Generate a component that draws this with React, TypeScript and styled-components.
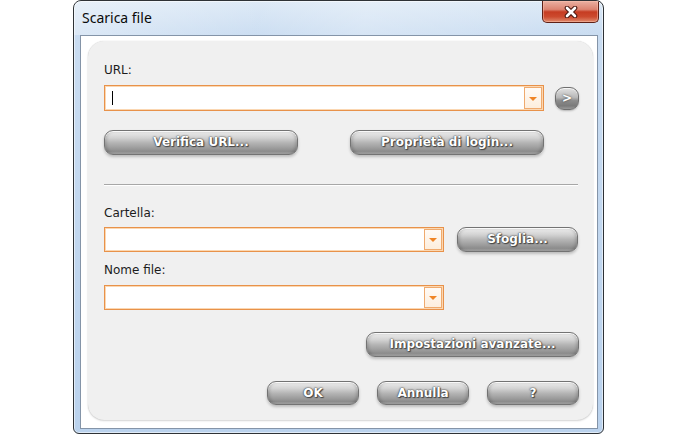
import React from 'react';
import styled, { createGlobalStyle } from 'styled-components';

const Global = createGlobalStyle`
  html, body { margin: 0; padding: 0; background: #ffffff; }
  body { width: 680px; height: 435px; overflow: hidden; }
  #root { width: 680px; height: 435px; }
`;

const Window = styled.div`
  box-sizing: border-box;
  margin-left: 73px;
  width: 531px;
  height: 434px;
  border: 1px solid #2e3236;
  border-radius: 8px 8px 6px 6px;
  background: linear-gradient(to bottom, #dce9f6 0px, #c9dcf1 34px, #bad2ed 100%);
  box-shadow: inset 0 0 0 1px rgba(255, 255, 255, 0.55);
  display: flex;
  flex-direction: column;
  overflow: hidden;
`;

const TitleBar = styled.div`
  height: 34px;
  flex: none;
  display: flex;
  align-items: center;
  padding-left: 8px;
  background: linear-gradient(100deg, rgba(255,255,255,0.35) 0%, rgba(255,255,255,0.05) 35%, rgba(255,255,255,0.25) 55%, rgba(255,255,255,0) 100%);
`;

const Title = styled.div`
  flex: 1;
  font: 14px "Noto Sans", "Open Sans", sans-serif;
  color: #0a0a0a;
  padding-bottom: 1px;
`;

const CloseButton = styled.div`
  align-self: flex-start;
  width: 57px;
  height: 22px;
  margin-right: 4px;
  box-sizing: border-box;
  border: 1px solid #5e2016;
  border-top: none;
  border-radius: 0 0 5px 5px;
  background: linear-gradient(to bottom, #eab0a2 0%, #dc8471 40%, #c63c22 52%, #cc4a2e 75%, #e08b6e 100%);
  box-shadow: inset 0 0 0 1px rgba(255, 200, 180, 0.45);
  display: flex;
  align-items: center;
  justify-content: center;
`;

const Client = styled.div`
  flex: 1;
  margin: 0 5px 4px 6px;
  border: 1px solid #8494a8;
  background: #ffffff;
  padding: 5px 4px 8px 7px;
  display: flex;
  flex-direction: column;
`;

const Panel = styled.div`
  flex: 1;
  background: #f0f0f0;
  border-radius: 16px;
  box-shadow: 0 1px 2px rgba(0, 0, 0, 0.16), 0 0 1px rgba(0, 0, 0, 0.18);
  padding: 0 14px 0 16px;
  display: flex;
  flex-direction: column;
`;

const Label = styled.div<{ $mt: number }>`
  margin-top: ${(p) => p.$mt}px;
  font: 12px "DejaVu Sans", "Liberation Sans", sans-serif;
  line-height: 16px;
  color: #1c1c1c;
`;

const Row = styled.div<{ $mt: number; $justify?: string; $gap?: number }>`
  margin-top: ${(p) => p.$mt}px;
  display: flex;
  align-items: center;
  justify-content: ${(p) => p.$justify ?? 'flex-start'};
  gap: ${(p) => p.$gap ?? 0}px;
`;

const Combo = styled.div<{ $w: number; $h: number }>`
  box-sizing: border-box;
  width: ${(p) => p.$w}px;
  height: ${(p) => p.$h}px;
  border: 1px solid #e8924a;
  box-shadow: inset 0 0 0 1px #fbd7b2;
  background: #ffffff;
  display: flex;
  align-items: center;
  padding: 1px;
`;

const Caret = styled.div`
  width: 1px;
  height: 14px;
  background: #000;
  margin-left: 6px;
`;

const ComboSpace = styled.div`
  flex: 1;
  align-self: stretch;
  display: flex;
  align-items: center;
`;

const DropBtn = styled.div`
  box-sizing: border-box;
  width: 18px;
  align-self: stretch;
  border: 1px solid #efaa6e;
  background: linear-gradient(to bottom, #fffaf5, #fdeedd);
  display: flex;
  align-items: center;
  justify-content: center;
`;

const Arrow = styled.div`
  width: 0;
  height: 0;
  border-left: 4px solid transparent;
  border-right: 4px solid transparent;
  border-top: 4px solid #f08526;
  margin-top: 1px;
`;

const GlossButton = styled.div<{ $w: number; $h?: number }>`
  box-sizing: border-box;
  width: ${(p) => p.$w}px;
  height: ${(p) => p.$h ?? 25}px;
  border: 1px solid #737373;
  border-radius: 9px;
  background: linear-gradient(to bottom, #eeeeee 0%, #d2d2d2 30%, #b6b6b6 50%, #9a9a9a 76%, #8c8c8c 88%, #b0b0b0 100%);
  box-shadow: inset 0 1px 0 rgba(255, 255, 255, 0.85), inset 2px 0 3px rgba(0,0,0,0.14), inset -2px 0 3px rgba(0,0,0,0.14), 0 2px 3px rgba(0, 0, 0, 0.22);
  display: flex;
  align-items: center;
  justify-content: center;
  font: bold 12px "DejaVu Sans", "Liberation Sans", sans-serif;
  color: #ffffff;
  text-shadow: 0 0 2px #3a3a3a, 0 0 1px #3a3a3a, 1px 1px 1px #4a4a4a;
  white-space: nowrap;
  padding-bottom: 1px;
`;

const GoButton = styled.div`
  box-sizing: border-box;
  width: 24px;
  height: 23px;
  margin-left: 11px;
  border: 1px solid #6f6f6f;
  border-radius: 9px;
  background: linear-gradient(to bottom, #e2e2e2 0%, #b8b8b8 45%, #8c8c8c 60%, #7a7a7a 85%, #9a9a9a 100%);
  box-shadow: inset 0 1px 0 rgba(255, 255, 255, 0.7), 0 1px 2px rgba(0, 0, 0, 0.25);
  display: flex;
  align-items: center;
  justify-content: center;
  font: bold 12px "DejaVu Sans", sans-serif;
  color: #ffffff;
  text-shadow: 0 0 2px #333;
`;

const Separator = styled.div`
  margin-top: 29px;
  height: 1px;
  background: #a7a7a7;
  box-shadow: 0 1px 0 #ffffff;
  margin-right: 1px;
`;

const ComboBox = ({ w, h, caret }: { w: number; h: number; caret?: boolean }) => (
  <Combo $w={w} $h={h}>
    <ComboSpace>{caret && <Caret />}</ComboSpace>
    <DropBtn>
      <Arrow />
    </DropBtn>
  </Combo>
);

export default function App() {
  return (
    <>
      <Global />
      <Window>
        <TitleBar>
          <Title>Scarica file</Title>
          <CloseButton>
            <svg width="14" height="12" viewBox="0 0 14 12">
              <path d="M3 2 L11 10 M11 2 L3 10" stroke="#4a1810" strokeWidth="4.6" strokeLinecap="round" />
              <path d="M3 2 L11 10 M11 2 L3 10" stroke="#ffffff" strokeWidth="2.6" strokeLinecap="round" />
            </svg>
          </CloseButton>
        </TitleBar>
        <Client>
          <Panel>
            <Label $mt={21}>URL:</Label>
            <Row $mt={7}>
              <ComboBox w={440} h={26} caret />
              <GoButton>&gt;</GoButton>
            </Row>
            <Row $mt={19} $gap={52}>
              <GlossButton $w={194}>Verifica URL...</GlossButton>
              <GlossButton $w={194}>Proprietà di login...</GlossButton>
            </Row>
            <Separator />
            <Label $mt={20}>Cartella:</Label>
            <Row $mt={6} $gap={13}>
              <ComboBox w={340} h={25} />
              <GlossButton $w={121}>Sfoglia...</GlossButton>
            </Row>
            <Label $mt={10}>Nome file:</Label>
            <Row $mt={7}>
              <ComboBox w={340} h={25} />
            </Row>
            <Row $mt={22} $justify="flex-end">
              <GlossButton $w={213}>Impostazioni avanzate...</GlossButton>
            </Row>
            <Row $mt={24} $justify="flex-end" $gap={18}>
              <GlossButton $w={92} $h={24}>OK</GlossButton>
              <GlossButton $w={92} $h={24}>Annulla</GlossButton>
              <GlossButton $w={92} $h={24}>?</GlossButton>
            </Row>
          </Panel>
        </Client>
      </Window>
    </>
  );
}
